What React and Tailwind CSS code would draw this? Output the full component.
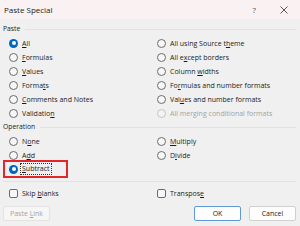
import React from 'react';

const U = ({ children }) => <span className="underline underline-offset-1">{children}</span>;

const Radio = ({ checked, disabled }) => (
  <span
    className={`inline-flex items-center justify-center w-[9px] h-[9px] rounded-full shrink-0 ${
      checked ? 'bg-[#0067c0]' : disabled ? 'border border-[#c4c4c4] bg-[#f3f3f3]' : 'border border-[#6b6b6b] bg-[#f7f7f7]'
    }`}
  >
    {checked && <span className="w-[4px] h-[4px] rounded-full bg-white" />}
  </span>
);

const Option = ({ label, checked, disabled, focus }) => (
  <div className={`flex items-center h-[14px] gap-[4px] ${disabled ? 'text-[#a3a3a3]' : 'text-[#1b1b1b]'}`}>
    <Radio checked={checked} disabled={disabled} />
    <span className={focus ? 'outline outline-1 outline-dotted outline-[#333] px-[1px] -ml-[1px] leading-[10px]' : ''}>{label}</span>
  </div>
);

const Heading = ({ children }) => (
  <div className="flex items-center h-[14px] gap-[5px] text-[6.8px] text-[#1b1b1b]">
    <span>{children}</span>
    <span className="flex-1 border-t border-[#e2e2e2]" />
  </div>
);

const Check = ({ label }) => (
  <div className="flex items-center h-[14px] gap-[4px] text-[#1b1b1b]">
    <span className="w-[9px] h-[9px] rounded-[2px] border border-[#6b6b6b] bg-[#f7f7f7] shrink-0" />
    <span>{label}</span>
  </div>
);

export default function App() {
  return (
    <div className="w-[300px] h-[226px] bg-[#f0f0f0] overflow-hidden font-['Open_Sans',sans-serif] text-[7px] leading-none">
      {/* title bar */}
      <div className="h-[19px] bg-[#faf2f2] flex items-center pl-[4px] pr-[12px] text-[#1b1b1b]">
        <span className="text-[8px] flex-1">Paste Special</span>
        <span className="text-[8px] text-[#555] mr-[24px]">?</span>
        <svg width="8" height="8" viewBox="0 0 8 8" className="text-[#444]">
          <path d="M0.5 0.5 L7.5 7.5 M7.5 0.5 L0.5 7.5" stroke="currentColor" strokeWidth="0.9" />
        </svg>
      </div>

      <div className="pl-[3px] pr-[4px] pt-[3px]">
        <Heading>Paste</Heading>
        <div className="grid grid-cols-[148px_1fr] pl-[6px]">
          <div>
            <Option checked label={<><U>A</U>ll</>} />
            <Option label={<><U>F</U>ormulas</>} />
            <Option label={<><U>V</U>alues</>} />
            <Option label={<>Forma<U>t</U>s</>} />
            <Option label={<><U>C</U>omments and Notes</>} />
            <Option label={<>Validatio<U>n</U></>} />
          </div>
          <div>
            <Option label={<>All using Source t<U>h</U>eme</>} />
            <Option label={<>All e<U>x</U>cept borders</>} />
            <Option label={<>Column <U>w</U>idths</>} />
            <Option label={<>Fo<U>r</U>mulas and number formats</>} />
            <Option label={<>Val<U>u</U>es and number formats</>} />
            <Option disabled label="All merging conditional formats" />
          </div>
        </div>

        <Heading>Operation</Heading>
        <div className="grid grid-cols-[148px_1fr] pl-[6px]">
          <div className="relative">
            <Option label={<>N<U>o</U>ne</>} />
            <Option label={<>A<U>d</U>d</>} />
            <Option checked focus label={<><U>S</U>ubtract</>} />
            <span className="absolute left-[-6px] top-[26px] w-[65px] h-[18px] border-2 border-[#e3262b]" />
          </div>
          <div>
            <Option label={<><U>M</U>ultiply</>} />
            <Option label={<>D<U>i</U>vide</>} />
          </div>
        </div>

        <div className="mt-[5px] border-t border-[#e2e2e2]" />

        <div className="grid grid-cols-[148px_1fr] pl-[6px] mt-[4px]">
          <Check label={<>Skip <U>b</U>lanks</>} />
          <Check label={<>Transpos<U>e</U></>} />
        </div>

        <div className="flex items-center mt-[6px] text-[7px]">
          <button className="w-[47px] h-[15px] rounded-[2px] border border-[#e3e3e3] bg-[#f6f6f6] text-[#a3a3a3]">
            Paste <U>L</U>ink
          </button>
          <span className="flex-1" />
          <button className="w-[47px] h-[15px] rounded-[2px] border border-[#5f9ad6] bg-[#fdfdfd] text-[#1b1b1b]">
            OK
          </button>
          <button className="w-[47px] h-[15px] ml-[8px] rounded-[2px] border border-[#d0d0d0] bg-[#fdfdfd] text-[#1b1b1b]">
            Cancel
          </button>
        </div>
      </div>
    </div>
  );
}
